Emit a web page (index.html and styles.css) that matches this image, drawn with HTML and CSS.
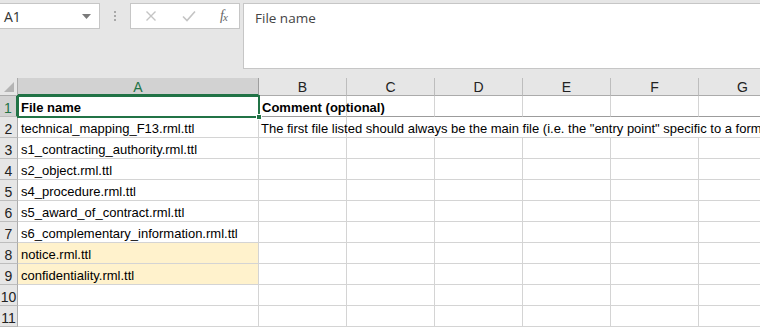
FILE: index.html
```html
<!DOCTYPE html>
<html>
<head>
<meta charset="utf-8">
<link rel="stylesheet" href="styles.css">
</head>
<body>
<div class="app">
  <div class="toolbar">
    <div class="namebox">
      <span class="ref">A1</span>
      <svg class="caret" width="9" height="5" viewBox="0 0 9 5"><path d="M0 0H9L4.5 5Z" fill="#7a7a7a"/></svg>
    </div>
    <div class="grip"><i></i><i></i><i></i></div>
    <div class="fbuttons">
      <svg class="btn" width="12" height="12" viewBox="0 0 12 12"><path d="M1.5 1.5L10.5 10.5M10.5 1.5L1.5 10.5" stroke="#c4c4c4" stroke-width="1.4" fill="none"/></svg>
      <svg class="btn" width="14" height="12" viewBox="0 0 14 12"><path d="M1 6.5L5 10.5L13 1.5" stroke="#c4c4c4" stroke-width="1.6" fill="none"/></svg>
      <span class="fx">f<sub>x</sub></span>
    </div>
    <div class="formula">File name</div>
  </div>
  <div class="sheet">
    <div class="corner"><svg width="10" height="10" viewBox="0 0 10 10"><path d="M10 0V10H0Z" fill="#b4b4b4"/></svg></div>
    <div class="ch sel">A</div>
    <div class="ch">B</div>
    <div class="ch">C</div>
    <div class="ch">D</div>
    <div class="ch">E</div>
    <div class="ch">F</div>
    <div class="ch">G</div>

    <div class="rh selr">1</div>
    <div class="c b hb">File name</div>
    <div class="c b hb over">Comment (optional)</div>
    <div class="c hb"></div><div class="c hb"></div><div class="c hb"></div><div class="c hb"></div><div class="c hb"></div>

    <div class="rh">2</div>
    <div class="c">technical_mapping_F13.rml.ttl</div>
    <div class="c over long">The first file listed should always be the main file (i.e. the "entry point" specific to a form)</div>
    <div class="c nol"></div><div class="c nol"></div><div class="c nol"></div><div class="c nol"></div><div class="c nol"></div>

    <div class="rh">3</div>
    <div class="c">s1_contracting_authority.rml.ttl</div>
    <div class="c"></div><div class="c"></div><div class="c"></div><div class="c"></div><div class="c"></div><div class="c"></div>

    <div class="rh">4</div>
    <div class="c">s2_object.rml.ttl</div>
    <div class="c"></div><div class="c"></div><div class="c"></div><div class="c"></div><div class="c"></div><div class="c"></div>

    <div class="rh">5</div>
    <div class="c">s4_procedure.rml.ttl</div>
    <div class="c"></div><div class="c"></div><div class="c"></div><div class="c"></div><div class="c"></div><div class="c"></div>

    <div class="rh">6</div>
    <div class="c">s5_award_of_contract.rml.ttl</div>
    <div class="c"></div><div class="c"></div><div class="c"></div><div class="c"></div><div class="c"></div><div class="c"></div>

    <div class="rh">7</div>
    <div class="c">s6_complementary_information.rml.ttl</div>
    <div class="c"></div><div class="c"></div><div class="c"></div><div class="c"></div><div class="c"></div><div class="c"></div>

    <div class="rh">8</div>
    <div class="c hl">notice.rml.ttl</div>
    <div class="c"></div><div class="c"></div><div class="c"></div><div class="c"></div><div class="c"></div><div class="c"></div>

    <div class="rh">9</div>
    <div class="c hl">confidentiality.rml.ttl</div>
    <div class="c"></div><div class="c"></div><div class="c"></div><div class="c"></div><div class="c"></div><div class="c"></div>

    <div class="rh">10</div>
    <div class="c"></div><div class="c"></div><div class="c"></div><div class="c"></div><div class="c"></div><div class="c"></div><div class="c"></div>

    <div class="rh">11</div>
    <div class="c"></div><div class="c"></div><div class="c"></div><div class="c"></div><div class="c"></div><div class="c"></div><div class="c"></div>

    <div class="selection"><span class="handle"></span></div>
  </div>
</div>
</body>
</html>
```
FILE: styles.css
```css
* { box-sizing: border-box; }
html, body { margin: 0; padding: 0; }
body {
  width: 760px;
  height: 327px;
  overflow: hidden;
  background: #e6e6e6;
  font-family: "Liberation Sans", Arial, sans-serif;
}
.app { display: flex; flex-direction: column; }
.toolbar {
  display: flex;
  align-items: flex-start;
  height: 78px;
  padding-top: 3px;
}
.namebox {
  width: 100px;
  height: 26px;
  background: #fff;
  border: 1px solid #c6c6c6;
  border-left: none;
  display: flex;
  align-items: center;
  justify-content: space-between;
  padding: 0 8px 0 4px;
}
.ref {
  font-family: "Open Sans", "Noto Sans", sans-serif;
  font-size: 14px;
  color: #333;
}
.grip {
  width: 30px;
  height: 26px;
  display: flex;
  flex-direction: column;
  align-items: center;
  justify-content: center;
  gap: 2px;
  padding-right: 1px;
}
.grip i { width: 2px; height: 2px; background: #a8a8a8; display: block; }
.fbuttons {
  width: 110px;
  height: 26px;
  background: #fff;
  border: 1px solid #c6c6c6;
  display: flex;
  align-items: center;
  padding-left: 14px;
}
.fbuttons .btn:first-child { margin-right: 25px; }
.fbuttons .btn:nth-child(2) { margin-right: 24px; }
.fx {
  font-family: "Liberation Serif", serif;
  font-style: italic;
  font-size: 14px;
  color: #666;
  line-height: 1;
}
.fx sub { font-size: 11px; vertical-align: -1px; margin-left: -1px; }
.formula {
  margin-left: 3px;
  flex: 1;
  height: 66px;
  background: #fff;
  border: 1px solid #c6c6c6;
  border-right: none;
  padding: 5px 0 0 11px;
  font-family: "Open Sans", "Noto Sans", sans-serif;
  font-size: 13.5px;
  color: #444;
}
.sheet {
  position: relative;
  display: grid;
  grid-template-columns: 18px 241px repeat(6, 88px);
  grid-template-rows: 18px repeat(11, 21px);
  background: #fff;
}
.corner {
  background: #e6e6e6;
  border-right: 1px solid #ababab;
  border-bottom: 1px solid #ababab;
  display: flex;
  align-items: flex-end;
  justify-content: flex-end;
  padding: 0 3px 3px 0;
}
.ch {
  background: #e6e6e6;
  border-bottom: 1px solid #ababab;
  border-right: 1px solid #bdbdbd;
  font-size: 14px;
  color: #222;
  display: flex;
  align-items: center;
  justify-content: center;
  padding-top: 1px;
}
.ch.sel {
  background: #d2d2d2;
  color: #217346;
  border-bottom: 2px solid #217346;
  border-right-color: #9e9e9e;
}
.rh {
  background: #e6e6e6;
  border-right: 1px solid #ababab;
  border-bottom: 1px solid #bdbdbd;
  font-size: 14px;
  color: #222;
  display: flex;
  align-items: flex-end;
  justify-content: center;
  padding-bottom: 0;
  overflow: visible;
  white-space: nowrap;
}
.rh.selr {
  background: #d2d2d2;
  color: #217346;
  border-right: 2px solid #217346;
}
.c {
  border-right: 1px solid #d4d4d4;
  border-bottom: 1px solid #d4d4d4;
  font-size: 13px;
  color: #000;
  white-space: nowrap;
  display: flex;
  align-items: flex-end;
  padding: 0 0 1px 3px;
  min-width: 0;
}
.c.b { font-weight: bold; }
.c.hb { border-bottom: 1px solid #9c9c9c; }
.c.over { overflow: visible; position: relative; z-index: 1; }
.c.long { padding-left: 2px; }
.c.nol { border-right: none; }
.c.hl { background: #fff2cc; }
.selection {
  position: absolute;
  left: 17px;
  top: 17px;
  width: 243px;
  height: 23px;
  border: 2px solid #217346;
  pointer-events: none;
  z-index: 2;
}
.handle {
  position: absolute;
  right: -4px;
  bottom: -4px;
  width: 6px;
  height: 6px;
  background: #217346;
  border: 1px solid #fff;
}
```
